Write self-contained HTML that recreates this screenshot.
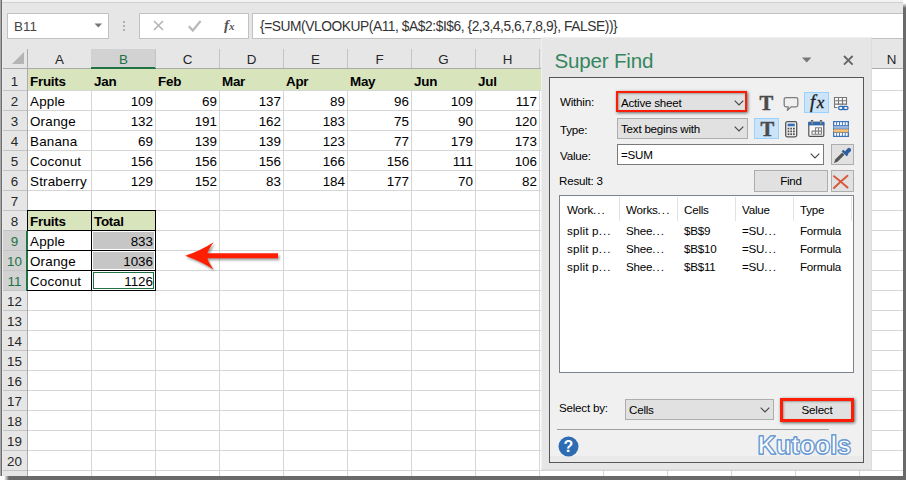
<!DOCTYPE html>
<html><head><meta charset="utf-8"><title>Super Find</title>
<style>
html,body{margin:0;padding:0;}
body{width:906px;height:480px;overflow:hidden;background:#fff;position:relative;font-family:"Liberation Sans",sans-serif;}
div,span{position:absolute;box-sizing:border-box;white-space:nowrap;}
svg{position:absolute;overflow:visible;}
#win{left:0;top:0;width:903px;height:476px;background:#e6e6e6;overflow:hidden;}
.c{font-size:13.4px;color:#000;line-height:20px;height:20px;margin-top:1px;letter-spacing:0.2px;}
.b{font-weight:bold;letter-spacing:-0.25px;}
.r{text-align:right;letter-spacing:0;}
.rh{left:2px;width:25px;text-align:center;font-size:13.4px;line-height:22px;height:20px;color:#262626;}
.ch{top:49px;height:20px;line-height:22px;text-align:center;font-size:13.4px;color:#262626;width:63px;}
.d{font-size:11.6px;letter-spacing:-0.22px;color:#000;line-height:14px;}
.lv{font-size:11.6px;letter-spacing:-0.22px;color:#000;line-height:14px;margin-top:-0.5px;}
.e{position:static;letter-spacing:1.1px;}
</style></head><body>
<div id="win">

<div style="left:0;top:0;width:903px;height:2px;background:#f3f3f3"></div>
<div style="left:0;top:2px;width:903px;height:1px;background:#d0d0d0"></div>
<div style="left:7px;top:13px;width:102px;height:26px;background:#fff;border:1px solid #c2c2c2"></div>
<div style="left:14px;top:17px;font-size:13.4px;line-height:20px;color:#444">B11</div>
<svg style="left:94px;top:23px" width="9" height="5"><path d="M0.5 0.5h7.6l-3.8 4z" fill="#777"/></svg>
<div style="left:123px;top:21px;width:2px;height:2px;background:#b0b0b0"></div><div style="left:123px;top:25px;width:2px;height:2px;background:#b0b0b0"></div><div style="left:123px;top:29px;width:2px;height:2px;background:#b0b0b0"></div>
<div style="left:139px;top:13px;width:110px;height:26px;background:#fff;border:1px solid #c2c2c2"></div>
<svg style="left:153px;top:20px" width="11" height="11"><path d="M1 1l9 9M10 1l-9 9" stroke="#b4b4b4" stroke-width="1.6" fill="none"/></svg>
<svg style="left:188px;top:20px" width="14" height="11"><path d="M0.800 6.200l4 4.300L12.600 1" stroke="#b9b9b9" stroke-width="2.200" fill="none"/></svg>
<div style="left:224px;top:15px;font-family:'Liberation Serif',serif;font-style:italic;font-size:15px;line-height:20px;color:#555"><span style="position:static;font-weight:bold">f</span><span style="position:static;font-size:11px;font-weight:bold">x</span></div>
<div style="left:252px;top:13px;width:660px;height:26px;background:#fff;border:1px solid #c2c2c2"></div>
<div id="ftext" style="left:260px;top:17px;font-size:13.8px;letter-spacing:-0.45px;line-height:20px;color:#333">{=SUM(VLOOKUP(A11, $A$2:$I$6, {2,3,4,5,6,7,8,9}, FALSE))}</div>
<div style="left:28px;top:69px;width:875px;height:407px;background:#fff"></div>
<div style="left:28px;top:69px;width:520px;height:21px;background:#d8e4bc"></div>
<div style="left:91px;top:91px;width:1px;height:385px;background:#d6d6d6"></div>
<div style="left:155px;top:91px;width:1px;height:385px;background:#d6d6d6"></div>
<div style="left:219px;top:91px;width:1px;height:385px;background:#d6d6d6"></div>
<div style="left:283px;top:91px;width:1px;height:385px;background:#d6d6d6"></div>
<div style="left:347px;top:91px;width:1px;height:385px;background:#d6d6d6"></div>
<div style="left:411px;top:91px;width:1px;height:385px;background:#d6d6d6"></div>
<div style="left:475px;top:91px;width:1px;height:385px;background:#d6d6d6"></div>
<div style="left:539px;top:91px;width:1px;height:385px;background:#d6d6d6"></div>
<div style="left:603px;top:91px;width:1px;height:385px;background:#d6d6d6"></div>
<div style="left:667px;top:91px;width:1px;height:385px;background:#d6d6d6"></div>
<div style="left:731px;top:91px;width:1px;height:385px;background:#d6d6d6"></div>
<div style="left:795px;top:91px;width:1px;height:385px;background:#d6d6d6"></div>
<div style="left:859px;top:91px;width:1px;height:385px;background:#d6d6d6"></div>
<div style="left:923px;top:91px;width:1px;height:385px;background:#d6d6d6"></div>
<div style="left:28px;top:90px;width:875px;height:1px;background:#d6d6d6"></div>
<div style="left:28px;top:110px;width:875px;height:1px;background:#d6d6d6"></div>
<div style="left:28px;top:130px;width:875px;height:1px;background:#d6d6d6"></div>
<div style="left:28px;top:150px;width:875px;height:1px;background:#d6d6d6"></div>
<div style="left:28px;top:170px;width:875px;height:1px;background:#d6d6d6"></div>
<div style="left:28px;top:190px;width:875px;height:1px;background:#d6d6d6"></div>
<div style="left:28px;top:210px;width:875px;height:1px;background:#d6d6d6"></div>
<div style="left:28px;top:230px;width:875px;height:1px;background:#d6d6d6"></div>
<div style="left:28px;top:250px;width:875px;height:1px;background:#d6d6d6"></div>
<div style="left:28px;top:270px;width:875px;height:1px;background:#d6d6d6"></div>
<div style="left:28px;top:290px;width:875px;height:1px;background:#d6d6d6"></div>
<div style="left:28px;top:310px;width:875px;height:1px;background:#d6d6d6"></div>
<div style="left:28px;top:330px;width:875px;height:1px;background:#d6d6d6"></div>
<div style="left:28px;top:350px;width:875px;height:1px;background:#d6d6d6"></div>
<div style="left:28px;top:370px;width:875px;height:1px;background:#d6d6d6"></div>
<div style="left:28px;top:390px;width:875px;height:1px;background:#d6d6d6"></div>
<div style="left:28px;top:410px;width:875px;height:1px;background:#d6d6d6"></div>
<div style="left:28px;top:430px;width:875px;height:1px;background:#d6d6d6"></div>
<div style="left:28px;top:450px;width:875px;height:1px;background:#d6d6d6"></div>
<div style="left:28px;top:470px;width:875px;height:1px;background:#d6d6d6"></div>
<div style="left:2px;top:49px;width:901px;height:19px;background:#e6e6e6"></div>
<div style="left:2px;top:68px;width:901px;height:1px;background:#ababab"></div>
<div class="ch" style="left:28px">A</div>
<div style="left:91px;top:49px;width:65px;height:18px;background:#d2d2d2"></div>
<div style="left:91px;top:67px;width:65px;height:2px;background:#217346"></div>
<div class="ch" style="left:92px;color:#217346">B</div>
<div class="ch" style="left:156px">C</div>
<div style="left:155px;top:49px;width:1px;height:19px;background:#c4c4c4"></div>
<div class="ch" style="left:220px">D</div>
<div style="left:219px;top:49px;width:1px;height:19px;background:#c4c4c4"></div>
<div class="ch" style="left:284px">E</div>
<div style="left:283px;top:49px;width:1px;height:19px;background:#c4c4c4"></div>
<div class="ch" style="left:348px">F</div>
<div style="left:347px;top:49px;width:1px;height:19px;background:#c4c4c4"></div>
<div class="ch" style="left:412px">G</div>
<div style="left:411px;top:49px;width:1px;height:19px;background:#c4c4c4"></div>
<div class="ch" style="left:476px">H</div>
<div style="left:475px;top:49px;width:1px;height:19px;background:#c4c4c4"></div>
<div class="ch" style="left:540px">I</div>
<div style="left:539px;top:49px;width:1px;height:19px;background:#c4c4c4"></div>
<div class="ch" style="left:604px">J</div>
<div style="left:603px;top:49px;width:1px;height:19px;background:#c4c4c4"></div>
<div class="ch" style="left:668px">K</div>
<div style="left:667px;top:49px;width:1px;height:19px;background:#c4c4c4"></div>
<div class="ch" style="left:732px">L</div>
<div style="left:731px;top:49px;width:1px;height:19px;background:#c4c4c4"></div>
<div class="ch" style="left:796px">M</div>
<div style="left:795px;top:49px;width:1px;height:19px;background:#c4c4c4"></div>
<div class="ch" style="left:860px">N</div>
<div style="left:859px;top:49px;width:1px;height:19px;background:#c4c4c4"></div>
<svg style="left:12px;top:52px" width="12" height="12"><path d="M12 0v12H0z" fill="#b4b4b4"/></svg>
<div style="left:2px;top:69px;width:25px;height:407px;background:#e6e6e6"></div>
<div style="left:27px;top:49px;width:1px;height:427px;background:#ababab"></div>
<div class="rh" style="top:71px;">1</div>
<div style="left:2px;top:90px;width:25px;height:1px;background:#c4c4c4"></div>
<div class="rh" style="top:91px;">2</div>
<div style="left:2px;top:110px;width:25px;height:1px;background:#c4c4c4"></div>
<div class="rh" style="top:111px;">3</div>
<div style="left:2px;top:130px;width:25px;height:1px;background:#c4c4c4"></div>
<div class="rh" style="top:131px;">4</div>
<div style="left:2px;top:150px;width:25px;height:1px;background:#c4c4c4"></div>
<div class="rh" style="top:151px;">5</div>
<div style="left:2px;top:170px;width:25px;height:1px;background:#c4c4c4"></div>
<div class="rh" style="top:171px;">6</div>
<div style="left:2px;top:190px;width:25px;height:1px;background:#c4c4c4"></div>
<div class="rh" style="top:191px;">7</div>
<div style="left:2px;top:210px;width:25px;height:1px;background:#c4c4c4"></div>
<div class="rh" style="top:211px;">8</div>
<div style="left:2px;top:230px;width:25px;height:1px;background:#c4c4c4"></div>
<div style="left:2px;top:231px;width:25px;height:19px;background:#d2d2d2"></div>
<div class="rh" style="top:231px;color:#217346;">9</div>
<div style="left:2px;top:250px;width:25px;height:1px;background:#c4c4c4"></div>
<div style="left:2px;top:251px;width:25px;height:19px;background:#d2d2d2"></div>
<div class="rh" style="top:251px;color:#217346;">10</div>
<div style="left:2px;top:270px;width:25px;height:1px;background:#c4c4c4"></div>
<div style="left:2px;top:271px;width:25px;height:19px;background:#d2d2d2"></div>
<div class="rh" style="top:271px;color:#217346;">11</div>
<div style="left:2px;top:290px;width:25px;height:1px;background:#c4c4c4"></div>
<div class="rh" style="top:291px;">12</div>
<div style="left:2px;top:310px;width:25px;height:1px;background:#c4c4c4"></div>
<div class="rh" style="top:311px;">13</div>
<div style="left:2px;top:330px;width:25px;height:1px;background:#c4c4c4"></div>
<div class="rh" style="top:331px;">14</div>
<div style="left:2px;top:350px;width:25px;height:1px;background:#c4c4c4"></div>
<div class="rh" style="top:351px;">15</div>
<div style="left:2px;top:370px;width:25px;height:1px;background:#c4c4c4"></div>
<div class="rh" style="top:371px;">16</div>
<div style="left:2px;top:390px;width:25px;height:1px;background:#c4c4c4"></div>
<div class="rh" style="top:391px;">17</div>
<div style="left:2px;top:410px;width:25px;height:1px;background:#c4c4c4"></div>
<div class="rh" style="top:411px;">18</div>
<div style="left:2px;top:430px;width:25px;height:1px;background:#c4c4c4"></div>
<div class="rh" style="top:431px;">19</div>
<div style="left:2px;top:450px;width:25px;height:1px;background:#c4c4c4"></div>
<div class="rh" style="top:451px;">20</div>
<div style="left:2px;top:470px;width:25px;height:1px;background:#c4c4c4"></div>
<div class="rh" style="top:471px;">21</div>
<div style="left:2px;top:490px;width:25px;height:1px;background:#c4c4c4"></div>
<div style="left:26px;top:231px;width:2px;height:60px;background:#217346"></div>
<div style="left:28px;top:211px;width:127px;height:19px;background:#d8e4bc"></div>
<div style="left:93px;top:232px;width:61px;height:17px;background:#c6c6c6"></div>
<div style="left:93px;top:252px;width:61px;height:17px;background:#c6c6c6"></div>
<div style="left:93px;top:272px;width:61px;height:17px;border:1px solid #217346"></div>
<div style="left:27px;top:210px;width:129px;height:1px;background:#000"></div>
<div style="left:27px;top:230px;width:129px;height:1px;background:#000"></div>
<div style="left:27px;top:250px;width:129px;height:1px;background:#000"></div>
<div style="left:27px;top:270px;width:129px;height:1px;background:#000"></div>
<div style="left:27px;top:290px;width:129px;height:1px;background:#000"></div>
<div style="left:91px;top:210px;width:1px;height:81px;background:#000"></div>
<div style="left:155px;top:210px;width:1px;height:81px;background:#000"></div>
<div style="left:27px;top:210px;width:1px;height:21px;background:#000"></div>
<div class="c b" style="left:30px;top:71px">Fruits</div>
<div class="c b" style="left:94px;top:71px">Jan</div>
<div class="c b" style="left:158px;top:71px">Feb</div>
<div class="c b" style="left:222px;top:71px">Mar</div>
<div class="c b" style="left:286px;top:71px">Apr</div>
<div class="c b" style="left:350px;top:71px">May</div>
<div class="c b" style="left:414px;top:71px">Jun</div>
<div class="c b" style="left:478px;top:71px">Jul</div>
<div class="c" style="left:30px;top:91px">Apple</div>
<div class="c r" style="left:92px;top:91px;width:61px">109</div>
<div class="c r" style="left:156px;top:91px;width:61px">69</div>
<div class="c r" style="left:220px;top:91px;width:61px">137</div>
<div class="c r" style="left:284px;top:91px;width:61px">89</div>
<div class="c r" style="left:348px;top:91px;width:61px">96</div>
<div class="c r" style="left:412px;top:91px;width:61px">109</div>
<div class="c r" style="left:476px;top:91px;width:61px">117</div>
<div class="c" style="left:30px;top:111px">Orange</div>
<div class="c r" style="left:92px;top:111px;width:61px">132</div>
<div class="c r" style="left:156px;top:111px;width:61px">191</div>
<div class="c r" style="left:220px;top:111px;width:61px">162</div>
<div class="c r" style="left:284px;top:111px;width:61px">183</div>
<div class="c r" style="left:348px;top:111px;width:61px">75</div>
<div class="c r" style="left:412px;top:111px;width:61px">90</div>
<div class="c r" style="left:476px;top:111px;width:61px">120</div>
<div class="c" style="left:30px;top:131px">Banana</div>
<div class="c r" style="left:92px;top:131px;width:61px">69</div>
<div class="c r" style="left:156px;top:131px;width:61px">139</div>
<div class="c r" style="left:220px;top:131px;width:61px">139</div>
<div class="c r" style="left:284px;top:131px;width:61px">123</div>
<div class="c r" style="left:348px;top:131px;width:61px">77</div>
<div class="c r" style="left:412px;top:131px;width:61px">179</div>
<div class="c r" style="left:476px;top:131px;width:61px">173</div>
<div class="c" style="left:30px;top:151px">Coconut</div>
<div class="c r" style="left:92px;top:151px;width:61px">156</div>
<div class="c r" style="left:156px;top:151px;width:61px">156</div>
<div class="c r" style="left:220px;top:151px;width:61px">156</div>
<div class="c r" style="left:284px;top:151px;width:61px">166</div>
<div class="c r" style="left:348px;top:151px;width:61px">156</div>
<div class="c r" style="left:412px;top:151px;width:61px">111</div>
<div class="c r" style="left:476px;top:151px;width:61px">106</div>
<div class="c" style="left:30px;top:171px">Straberry</div>
<div class="c r" style="left:92px;top:171px;width:61px">129</div>
<div class="c r" style="left:156px;top:171px;width:61px">152</div>
<div class="c r" style="left:220px;top:171px;width:61px">83</div>
<div class="c r" style="left:284px;top:171px;width:61px">184</div>
<div class="c r" style="left:348px;top:171px;width:61px">177</div>
<div class="c r" style="left:412px;top:171px;width:61px">70</div>
<div class="c r" style="left:476px;top:171px;width:61px">82</div>
<div class="c b" style="left:30px;top:211px">Fruits</div>
<div class="c b" style="left:94px;top:211px">Total</div>
<div class="c" style="left:30px;top:231px">Apple</div>
<div class="c r" style="left:92px;top:231px;width:61px">833</div>
<div class="c" style="left:30px;top:251px">Orange</div>
<div class="c r" style="left:92px;top:251px;width:61px">1036</div>
<div class="c" style="left:30px;top:271px">Coconut</div>
<div class="c r" style="left:92px;top:271px;width:61px">1126</div>
<svg style="left:175px;top:235px" width="120" height="45" viewBox="0 0 120 45">
<defs><filter id="ash" x="-10%" y="-20%" width="120%" height="150%"><feGaussianBlur stdDeviation="0.9"/></filter></defs>
<g transform="translate(1.5,2)" opacity="0.55" filter="url(#ash)"><path d="M10 20.8 Q26 15.5 38.5 7.2 Q32.5 16 32.5 18.3 L103 18.3 L103 23.3 L32.5 23.3 Q32.5 26 38.5 34.4 Q26 26.300 10 20.8 Z" fill="#555"/></g>
<path d="M10 20.8 Q26 15.5 38.5 7.2 Q32.5 16 32.5 18.3 L103 18.3 L103 23.3 L32.5 23.3 Q32.5 26 38.5 34.4 Q26 26.300 10 20.8 Z" fill="#ff1f00"/>
</svg>
<div id="panel" style="left:541px;top:37px;width:331px;height:433px;background:#e6e6e6;border:1px solid #efefef;border-bottom-color:#dcdcdc;border-right-color:#dcdcdc"></div>
<div style="left:554.5px;top:46px;font-size:20.6px;line-height:30px;color:#35865f;letter-spacing:-0.2px" id="ttl">Super Find</div>
<svg style="left:802px;top:57px" width="10" height="6"><path d="M0 0.5h9.4L4.7 5.6z" fill="#777"/></svg>
<svg style="left:843px;top:55px" width="11" height="11"><path d="M1 1l8.6 8.6M9.6 1L1 9.6" stroke="#666" stroke-width="1.9" fill="none"/></svg>
<div id="inner" style="left:549px;top:77px;width:315px;height:386px;background:#f0f0f0;border:1px solid #565656"></div>
<div style="left:550px;top:456px;width:313px;height:6px;background:#e9e9e9"></div>
<div class="d" style="left:560px;top:95px">Within:</div>
<div class="d" style="left:560px;top:123px">Type:</div>
<div class="d" style="left:560px;top:149px">Value:</div>
<div class="d" style="left:559px;top:174px">Result: 3</div>
<div class="d" style="left:559px;top:401px">Select by:</div>
<div style="left:616px;top:91px;width:131px;height:21px;background:#e1e1e1;border:2px solid #fb1d06;box-shadow:1px 1px 3px rgba(0,0,0,.6),inset 1px 1px 2px rgba(0,0,0,.3)"></div>
<div class="d" style="left:621px;top:96px">Active sheet</div>
<svg style="left:734px;top:99.5px" width="10" height="6"><path d="M0.700 0.700l4.300 4.300 4.300-4.300" stroke="#444" stroke-width="1.100" fill="none"/></svg>
<div style="left:617px;top:118px;width:131px;height:21px;background:#e1e1e1;border:1px solid #adadad"></div>
<div class="d" style="left:621px;top:122px">Text begins with</div>
<svg style="left:734px;top:126px" width="10" height="6"><path d="M0.700 0.700l4.300 4.300 4.300-4.300" stroke="#444" stroke-width="1.100" fill="none"/></svg>
<div style="left:617px;top:144px;width:207px;height:21px;background:#fff;border:1px solid #7a7a7a"></div>
<div class="d" style="left:621px;top:148px">=SUM</div>
<svg style="left:810px;top:152.5px" width="10" height="6"><path d="M0.700 0.700l4.300 4.300 4.300-4.300" stroke="#444" stroke-width="1.100" fill="none"/></svg>
<div style="left:759.5px;top:92px;font-family:'Liberation Serif',serif;font-weight:bold;font-size:20.5px;line-height:22px;color:#4a4a4a;-webkit-text-stroke:0.5px #4a4a4a">T</div>
<svg style="left:783px;top:96px" width="16" height="16" viewBox="0 0 16 16"><path d="M3 1.500H13A1.800 1.800 0 0 1 14.800 3.300V9A1.800 1.800 0 0 1 13 10.800H8.300L4.300 14.400L5.300 10.800H3A1.800 1.800 0 0 1 1.200 9V3.300A1.800 1.800 0 0 1 3 1.500Z" fill="none" stroke="#7c7c7c" stroke-width="1.250" stroke-linejoin="round"/></svg>
<div style="left:804px;top:92px;width:25px;height:21px;background:#cce4f7;border:1px solid #99d1ff"></div>
<div style="left:810px;top:91px;font-family:'Liberation Serif',serif;font-style:italic;font-size:18.5px;line-height:22px;color:#1c1c1c;-webkit-text-stroke:0.35px #1c1c1c"><span style="position:static">f</span><span style="position:static;font-size:17px;margin-left:1.5px">x</span></div>
<svg style="left:833px;top:96px" width="17" height="16" viewBox="0 0 17 16"><path d="M1.500 1.500h12v10h-12zM1.500 4.800h12M1.500 8.100h12M5.500 1.500v10M9.500 1.500v10" fill="#fafafa" stroke="#777" stroke-width="1.100"/><rect x="4.300" y="9" width="12.700" height="6.500" fill="#f0f0f0"/><rect x="5.600" y="10.300" width="5.400" height="3.400" rx="1.700" fill="none" stroke="#2e6db4" stroke-width="1.300"/><rect x="9.600" y="10.300" width="5.400" height="3.400" rx="1.700" fill="none" stroke="#2e6db4" stroke-width="1.300"/></svg>
<div style="left:754px;top:118px;width:25px;height:21px;background:#cce4f7;border:1px solid #99d1ff"></div>
<div style="left:760.5px;top:118px;font-family:'Liberation Serif',serif;font-weight:bold;font-size:20.5px;line-height:22px;color:#4a4a4a;-webkit-text-stroke:0.5px #4a4a4a">T</div>
<svg style="left:785px;top:121px" width="13" height="17" viewBox="0 0 13 17"><rect x="0.700" y="0.700" width="11" height="15.100" rx="1.500" fill="#f4f4f4" stroke="#555" stroke-width="1.300"/><rect x="2.600" y="2.600" width="7.200" height="2.700" fill="#3b6fb5"/><g fill="#555"><rect x="2.600" y="6.700" width="1.800" height="1.800"/><rect x="5.300" y="6.700" width="1.800" height="1.800"/><rect x="8" y="6.700" width="1.800" height="1.800"/><rect x="2.600" y="9.500" width="1.800" height="1.800"/><rect x="5.300" y="9.500" width="1.800" height="1.800"/><rect x="8" y="9.500" width="1.800" height="1.800"/><rect x="2.600" y="12.300" width="1.800" height="1.800"/><rect x="5.300" y="12.300" width="1.800" height="1.800"/><rect x="8" y="12.300" width="1.800" height="1.800"/></g></svg>
<svg style="left:808px;top:120px" width="17" height="17" viewBox="0 0 17 17"><rect x="0.800" y="2.300" width="15" height="14" rx="1" fill="#fafafa" stroke="#505050" stroke-width="1.200"/><rect x="0.200" y="1.800" width="16.200" height="3.600" fill="#2e6db4"/><rect x="3.300" y="0.500" width="1.500" height="4" fill="#f4f4f4" stroke="#505050" stroke-width="0.700"/><rect x="12.200" y="0.500" width="1.500" height="4" fill="#f4f4f4" stroke="#505050" stroke-width="0.700"/><path d="M7.500 7.800h6v6.500h-9.500v-3.200h3.500zM7.500 7.800v6.500M10.500 7.800v6.500M4 11.100h9.500" fill="none" stroke="#808080" stroke-width="1.100"/></svg>
<svg style="left:833px;top:121px" width="16" height="16" viewBox="0 0 16 16"><rect x="0" y="0" width="16" height="16" fill="#3f74b8"/><rect x="0.600" y="4.700" width="14.800" height="3.100" fill="#8fb0dc"/><rect x="0.600" y="8.200" width="14.800" height="3.200" fill="#f6b45c"/><path d="M0.600 9.800h14.800" stroke="#f9cf97" stroke-width="0.800"/><path d="M0.600 6.200h14.800" stroke="#a9c2e6" stroke-width="0.800"/><g fill="#fff"><rect x="1.30" y="1.200" width="1.900" height="2.800"/><rect x="4.15" y="1.200" width="1.900" height="2.800"/><rect x="7.00" y="1.200" width="1.900" height="2.800"/><rect x="9.85" y="1.200" width="1.900" height="2.800"/><rect x="12.70" y="1.200" width="1.900" height="2.800"/><rect x="1.30" y="12" width="1.900" height="2.800"/><rect x="4.15" y="12" width="1.900" height="2.800"/><rect x="7.00" y="12" width="1.900" height="2.800"/><rect x="9.85" y="12" width="1.900" height="2.800"/><rect x="12.70" y="12" width="1.900" height="2.800"/></g></svg>
<div style="left:831px;top:144px;width:23px;height:21px;background:#e1e1e1;border:1px solid #adadad"></div>
<svg style="left:833px;top:146px" width="19" height="18" viewBox="0 0 19 18"><path d="M1 17l1.200-3.500 7-7 2.300 2.300-7 7z" fill="#555"/><path d="M9.500 4.500l5 5" stroke="#2e5e9e" stroke-width="2.400"/><path d="M11 6.500l3.500-4a2 2 0 0 1 3 3l-4 3.500z" fill="#2e5e9e"/></svg>
<div style="left:754px;top:170px;width:74px;height:22px;background:#e1e1e1;border:1px solid #adadad"></div>
<div class="d" style="left:754px;top:174px;width:74px;text-align:center">Find</div>
<div style="left:831px;top:170px;width:23px;height:22px;background:#e1e1e1;border:1px solid #adadad"></div>
<svg style="left:833px;top:175px" width="16" height="14"><path d="M1 1.200C5.500 4.500 10 8.500 14.500 12.500M14.500 0.800C10 4.500 5.500 8.500 1 13" stroke="#d9583c" stroke-width="2" fill="none" stroke-linecap="round"/></svg>
<div style="left:559px;top:195px;width:295px;height:178px;background:#fff;border:1px solid #7d838c"></div>
<div style="left:619px;top:197px;width:1px;height:24px;background:#e2e2e2"></div>
<div style="left:677px;top:197px;width:1px;height:24px;background:#e2e2e2"></div>
<div style="left:735px;top:197px;width:1px;height:24px;background:#e2e2e2"></div>
<div style="left:793px;top:197px;width:1px;height:24px;background:#e2e2e2"></div>
<div style="left:851px;top:197px;width:1px;height:24px;background:#e2e2e2"></div>
<div class="lv" style="left:567px;top:203px">Work<span class=e>...</span></div>
<div class="lv" style="left:626px;top:203px">Works<span class=e>...</span></div>
<div class="lv" style="left:684px;top:203px">Cells</div>
<div class="lv" style="left:742px;top:203px">Value</div>
<div class="lv" style="left:800px;top:203px">Type</div>
<div class="lv" style="left:567px;top:224px"><span style="position:static;letter-spacing:0.2px">split p</span><span class=e>...</span></div>
<div class="lv" style="left:626px;top:224px">Shee<span class=e>...</span></div>
<div class="lv" style="left:684px;top:224px">$B$9</div>
<div class="lv" style="left:742px;top:224px">=SU<span class=e>...</span></div>
<div class="lv" style="left:800px;top:224px">Formula</div>
<div class="lv" style="left:567px;top:242px"><span style="position:static;letter-spacing:0.2px">split p</span><span class=e>...</span></div>
<div class="lv" style="left:626px;top:242px">Shee<span class=e>...</span></div>
<div class="lv" style="left:684px;top:242px">$B$10</div>
<div class="lv" style="left:742px;top:242px">=SU<span class=e>...</span></div>
<div class="lv" style="left:800px;top:242px">Formula</div>
<div class="lv" style="left:567px;top:260px"><span style="position:static;letter-spacing:0.2px">split p</span><span class=e>...</span></div>
<div class="lv" style="left:626px;top:260px">Shee<span class=e>...</span></div>
<div class="lv" style="left:684px;top:260px">$B$11</div>
<div class="lv" style="left:742px;top:260px">=SU<span class=e>...</span></div>
<div class="lv" style="left:800px;top:260px">Formula</div>
<div style="left:625px;top:399px;width:149px;height:21px;background:#e1e1e1;border:1px solid #adadad"></div>
<div class="d" style="left:629px;top:403px">Cells</div>
<svg style="left:760px;top:407px" width="10" height="6"><path d="M0.700 0.700l4.300 4.300 4.300-4.300" stroke="#444" stroke-width="1.100" fill="none"/></svg>
<div style="left:780px;top:398px;width:74px;height:24px;background:#e1e1e1;border:3px solid #fb1d06;box-shadow:1px 1px 3px rgba(0,0,0,.6),inset 1px 1px 2px rgba(0,0,0,.3)"></div>
<div class="d" style="left:780px;top:403px;width:74px;text-align:center">Select</div>
<div style="left:557px;top:429px;width:272px;height:1px;background:#a0a0a0"></div>
<svg style="left:557.5px;top:436px" width="21" height="21" viewBox="0 0 21 21"><circle cx="10.500" cy="10.500" r="10" fill="#2e6db4"/><text x="10.500" y="16" text-anchor="middle" font-family="Liberation Sans, sans-serif" font-weight="bold" font-size="16" fill="#fff">?</text></svg>
<svg style="left:755px;top:432px" width="100" height="28" viewBox="0 0 100 28"><defs><filter id="kb" x="-5%" y="-20%" width="110%" height="140%"><feGaussianBlur stdDeviation="0.55"/></filter></defs><text x="2.800" y="22" font-family="Liberation Sans, sans-serif" font-weight="bold" font-size="25" fill="#7aa5d8" stroke="#7aa5d8" stroke-width="1.900" stroke-linejoin="round" filter="url(#kb)" textLength="93.5" lengthAdjust="spacingAndGlyphs">Kutools</text><text x="2.800" y="22" font-family="Liberation Sans, sans-serif" font-weight="bold" font-size="25" fill="#fdfeff" stroke="#6293cf" stroke-width="0.900" stroke-linejoin="round" textLength="93.5" lengthAdjust="spacingAndGlyphs">Kutools</text></svg>
</div>
<div style="left:0;top:0;width:1px;height:476px;background:#a8a8a8"></div>
<div style="left:1px;top:0;width:1px;height:476px;background:#6a6a6a"></div>
<div style="left:2px;top:3px;width:1px;height:473px;background:#ececec"></div>
<div style="left:903px;top:0;width:3px;height:480px;background:linear-gradient(to bottom,#fff 0,#fff 3px,#6a6a6a 8px)"></div>
<div style="left:0;top:476px;width:906px;height:4px;background:linear-gradient(to right,#fff 0,#fff 4px,#6a6a6a 9px)"></div>
</body></html>
